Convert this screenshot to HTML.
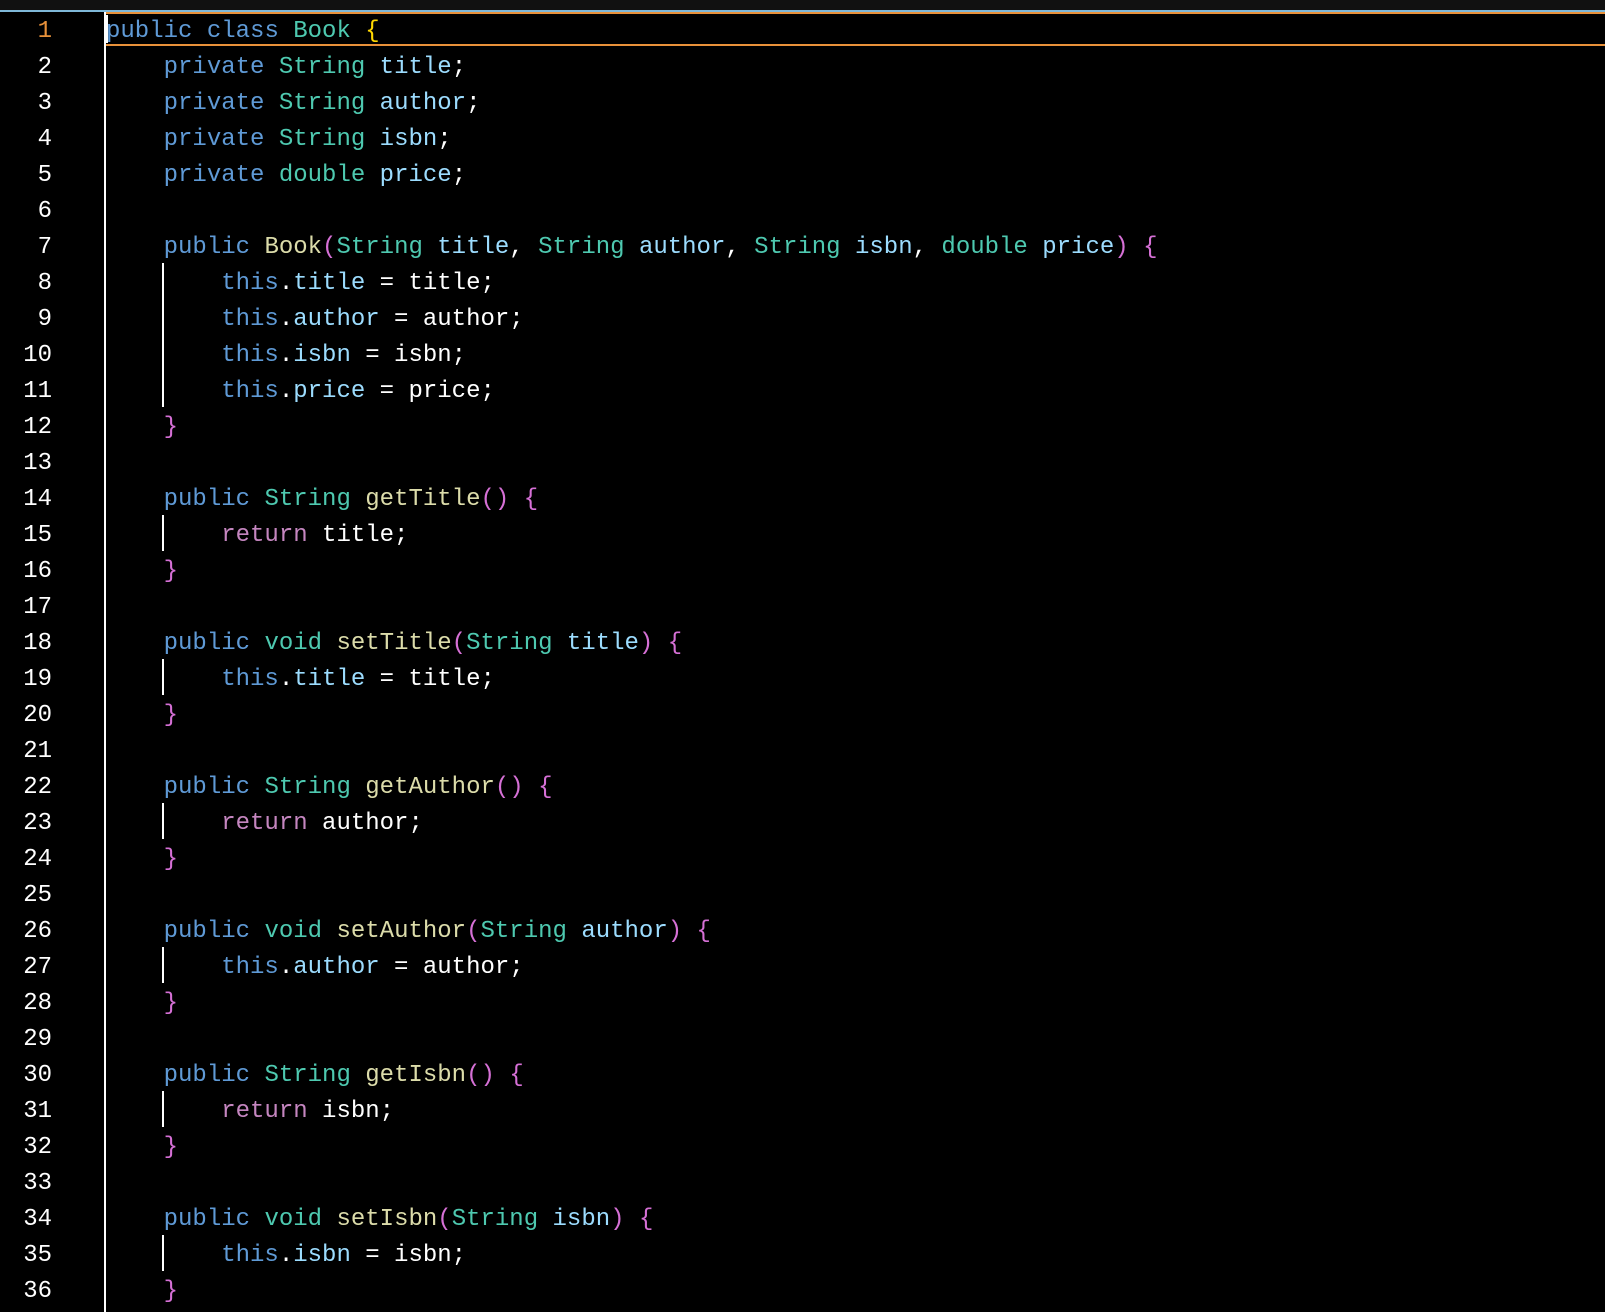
<!DOCTYPE html>
<html><head><meta charset="utf-8"><style>
html,body{margin:0;padding:0;background:#000;width:1605px;height:1312px;overflow:hidden}
body{position:relative;font-family:"Liberation Mono","DejaVu Sans Mono",monospace;font-size:24px;color:#fff}
.top{position:absolute;left:0;top:0;width:1605px;height:10px;background:#111}
.bl{position:absolute;left:0;top:10px;width:1605px;height:2px;background:#7fb8d8}
.hl{position:absolute;left:106px;top:12px;width:1499px;height:34px;border-top:2px solid #e8913a;border-bottom:2px solid #e8913a;box-sizing:border-box}
.gut{position:absolute;left:104px;top:12px;width:2px;height:1300px;background:#fff}
.cur{position:absolute;left:106px;top:15px;width:2px;height:28px;background:#fff}
.ln{position:absolute;left:0;width:52px;text-align:right;height:36px;line-height:36px}
.cl{position:absolute;left:106px;height:36px;line-height:36px;white-space:pre}
.g{position:absolute;left:162px;width:2px;background:#fff}
.k{color:#5f9ad6}.t{color:#4ec9b0}.v{color:#9cdcfe}.f{color:#dcdcaa}.p{color:#d670d6}.y{color:#ffd700}.r{color:#c586c0}
</style></head><body>
<div class="top"></div><div class="bl"></div><div class="hl"></div><div class="gut"></div>
<div class="g" style="top:263px;height:144px"></div>
<div class="g" style="top:515px;height:36px"></div>
<div class="g" style="top:659px;height:36px"></div>
<div class="g" style="top:803px;height:36px"></div>
<div class="g" style="top:947px;height:36px"></div>
<div class="g" style="top:1091px;height:36px"></div>
<div class="g" style="top:1235px;height:36px"></div>
<div class="cur"></div>

<div class="ln" style="top:14px;color:#e8913a">1</div><div class="cl" style="top:14px"><span class="k">public</span> <span class="k">class</span> <span class="t">Book</span> <span class="y">{</span></div>
<div class="ln" style="top:50px">2</div><div class="cl" style="top:50px">    <span class="k">private</span> <span class="t">String</span> <span class="v">title</span>;</div>
<div class="ln" style="top:86px">3</div><div class="cl" style="top:86px">    <span class="k">private</span> <span class="t">String</span> <span class="v">author</span>;</div>
<div class="ln" style="top:122px">4</div><div class="cl" style="top:122px">    <span class="k">private</span> <span class="t">String</span> <span class="v">isbn</span>;</div>
<div class="ln" style="top:158px">5</div><div class="cl" style="top:158px">    <span class="k">private</span> <span class="t">double</span> <span class="v">price</span>;</div>
<div class="ln" style="top:194px">6</div>
<div class="ln" style="top:230px">7</div><div class="cl" style="top:230px">    <span class="k">public</span> <span class="f">Book</span><span class="p">(</span><span class="t">String</span> <span class="v">title</span>, <span class="t">String</span> <span class="v">author</span>, <span class="t">String</span> <span class="v">isbn</span>, <span class="t">double</span> <span class="v">price</span><span class="p">)</span> <span class="p">{</span></div>
<div class="ln" style="top:266px">8</div><div class="cl" style="top:266px">        <span class="k">this</span>.<span class="v">title</span> = title;</div>
<div class="ln" style="top:302px">9</div><div class="cl" style="top:302px">        <span class="k">this</span>.<span class="v">author</span> = author;</div>
<div class="ln" style="top:338px">10</div><div class="cl" style="top:338px">        <span class="k">this</span>.<span class="v">isbn</span> = isbn;</div>
<div class="ln" style="top:374px">11</div><div class="cl" style="top:374px">        <span class="k">this</span>.<span class="v">price</span> = price;</div>
<div class="ln" style="top:410px">12</div><div class="cl" style="top:410px">    <span class="p">}</span></div>
<div class="ln" style="top:446px">13</div>
<div class="ln" style="top:482px">14</div><div class="cl" style="top:482px">    <span class="k">public</span> <span class="t">String</span> <span class="f">getTitle</span><span class="p">()</span> <span class="p">{</span></div>
<div class="ln" style="top:518px">15</div><div class="cl" style="top:518px">        <span class="r">return</span> title;</div>
<div class="ln" style="top:554px">16</div><div class="cl" style="top:554px">    <span class="p">}</span></div>
<div class="ln" style="top:590px">17</div>
<div class="ln" style="top:626px">18</div><div class="cl" style="top:626px">    <span class="k">public</span> <span class="t">void</span> <span class="f">setTitle</span><span class="p">(</span><span class="t">String</span> <span class="v">title</span><span class="p">)</span> <span class="p">{</span></div>
<div class="ln" style="top:662px">19</div><div class="cl" style="top:662px">        <span class="k">this</span>.<span class="v">title</span> = title;</div>
<div class="ln" style="top:698px">20</div><div class="cl" style="top:698px">    <span class="p">}</span></div>
<div class="ln" style="top:734px">21</div>
<div class="ln" style="top:770px">22</div><div class="cl" style="top:770px">    <span class="k">public</span> <span class="t">String</span> <span class="f">getAuthor</span><span class="p">()</span> <span class="p">{</span></div>
<div class="ln" style="top:806px">23</div><div class="cl" style="top:806px">        <span class="r">return</span> author;</div>
<div class="ln" style="top:842px">24</div><div class="cl" style="top:842px">    <span class="p">}</span></div>
<div class="ln" style="top:878px">25</div>
<div class="ln" style="top:914px">26</div><div class="cl" style="top:914px">    <span class="k">public</span> <span class="t">void</span> <span class="f">setAuthor</span><span class="p">(</span><span class="t">String</span> <span class="v">author</span><span class="p">)</span> <span class="p">{</span></div>
<div class="ln" style="top:950px">27</div><div class="cl" style="top:950px">        <span class="k">this</span>.<span class="v">author</span> = author;</div>
<div class="ln" style="top:986px">28</div><div class="cl" style="top:986px">    <span class="p">}</span></div>
<div class="ln" style="top:1022px">29</div>
<div class="ln" style="top:1058px">30</div><div class="cl" style="top:1058px">    <span class="k">public</span> <span class="t">String</span> <span class="f">getIsbn</span><span class="p">()</span> <span class="p">{</span></div>
<div class="ln" style="top:1094px">31</div><div class="cl" style="top:1094px">        <span class="r">return</span> isbn;</div>
<div class="ln" style="top:1130px">32</div><div class="cl" style="top:1130px">    <span class="p">}</span></div>
<div class="ln" style="top:1166px">33</div>
<div class="ln" style="top:1202px">34</div><div class="cl" style="top:1202px">    <span class="k">public</span> <span class="t">void</span> <span class="f">setIsbn</span><span class="p">(</span><span class="t">String</span> <span class="v">isbn</span><span class="p">)</span> <span class="p">{</span></div>
<div class="ln" style="top:1238px">35</div><div class="cl" style="top:1238px">        <span class="k">this</span>.<span class="v">isbn</span> = isbn;</div>
<div class="ln" style="top:1274px">36</div><div class="cl" style="top:1274px">    <span class="p">}</span></div>
</body></html>
